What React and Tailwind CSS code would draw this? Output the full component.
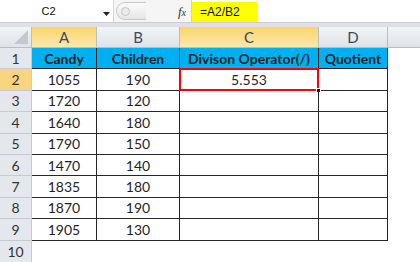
import React from "react";

const rows = [
  ["1055", "190", "5.553"],
  ["1720", "120", ""],
  ["1640", "180", ""],
  ["1790", "150", ""],
  ["1470", "140", ""],
  ["1835", "180", ""],
  ["1870", "190", ""],
  ["1905", "130", ""],
];

const RowHead = ({ n, selected }) => (
  <div
    className={
      "w-[32px] shrink-0 flex items-center justify-center border-r border-b border-[#c6cbd1] text-[14px] text-[#333] " +
      (selected ? "bg-[#f8d57e]" : "bg-[#e4e8ed]")
    }
  >
    {n}
  </div>
);

const Cell = ({ w, children, className = "" }) => (
  <div
    className={
      "shrink-0 flex items-center justify-center border-r border-b border-[#262626] text-[14px] text-[#1f1f1f] " +
      className
    }
    style={{ width: w }}
  >
    {children}
  </div>
);

const ColHead = ({ w, label, selected }) => (
  <div
    className={
      "shrink-0 flex items-center justify-center border-r border-b border-[#b9bec5] text-[15px] text-[#3b4a5e] " +
      (selected
        ? "bg-gradient-to-b from-[#fbd46a] to-[#fde9aa]"
        : "bg-gradient-to-b from-[#f2f4f6] to-[#dfe3e8]")
    }
    style={{ width: w }}
  >
    {label}
  </div>
);

export default function App() {
  return (
    <div className="w-[420px] h-[262px] overflow-hidden bg-white font-['Lato',sans-serif]">
      {/* formula bar */}
      <div className="h-[22px] flex items-stretch bg-white font-['Liberation_Sans',sans-serif]">
        <div className="w-[114px] shrink-0 relative flex items-center border-r border-[#d5d5d5]">
          <span className="w-full text-center pr-[16px] text-[11px] text-[#111]">C2</span>
          <svg className="absolute left-[103px] top-[12px]" width="7" height="4" viewBox="0 0 7 4">
            <path d="M0 0 L7 0 L3.5 4 Z" fill="#222" />
          </svg>
        </div>
        <div className="w-[78px] shrink-0 flex items-center bg-[#f5f5f5] border-r border-[#cfcfcf]">
          <div className="ml-[2px] h-[18px] w-[30px] rounded-l-full border-l border-y border-[#c9c9c9] bg-gradient-to-b from-[#fbfbfb] to-[#e6e6e6] flex items-center pl-[4px]">
            <div className="w-[9px] h-[9px] rounded-full border border-[#c4c4c4] bg-[#ececec]" />
          </div>
          <span className="ml-auto mr-[5px] font-['Liberation_Serif',serif] italic text-[13px] text-[#333] leading-none">
            f<span className="text-[10px]">x</span>
          </span>
        </div>
        <div className="flex-1 flex items-center">
          <div className="h-[20px] mt-[1px] w-[66px] bg-[#ffff00] flex items-center pl-[8px] text-[12px] text-[#111]">
            =A2/B2
          </div>
        </div>
      </div>
      <div className="h-[5px] bg-[#dde1e6] border-t border-[#c9ced4]" />

      {/* column headers */}
      <div className="h-[21px] flex">
        <div className="w-[32px] shrink-0 relative bg-gradient-to-b from-[#f2f4f6] to-[#dfe3e8] border-r border-b border-[#b9bec5]">
          <svg className="absolute right-[3px] bottom-[3px]" width="14" height="14" viewBox="0 0 14 14">
            <path d="M14 0 L14 14 L0 14 Z" fill="#c3c8ce" />
          </svg>
        </div>
        <ColHead w={65} label="A" selected />
        <ColHead w={83} label="B" />
        <ColHead w={139} label="C" selected />
        <ColHead w={69} label="D" />
        <div className="flex-1 bg-gradient-to-b from-[#f2f4f6] to-[#dfe3e8] border-b border-[#b9bec5]" />
      </div>

      {/* row 1 */}
      <div className="h-[21.4px] flex">
        <RowHead n={1} />
        <Cell w={65} className="bg-[#00b0f0] font-bold">Candy</Cell>
        <Cell w={83} className="bg-[#00b0f0] font-bold">Children</Cell>
        <Cell w={139} className="bg-[#00b0f0] font-bold whitespace-nowrap">Divison Operator(/)</Cell>
        <Cell w={69} className="bg-[#00b0f0] font-bold">Quotient</Cell>
      </div>

      {rows.map((r, i) => (
        <div key={i} className="h-[21.4px] flex">
          <RowHead n={i + 2} selected={i === 0} />
          <Cell w={65}>{r[0]}</Cell>
          <Cell w={83}>{r[1]}</Cell>
          <Cell w={139} className="relative">
            {r[2]}
            {i === 0 && (
              <>
                <div className="absolute -left-[1px] -top-[1px] -right-[1px] -bottom-[1px] border-2 border-[#ff0000]" />
                <div className="absolute -right-[3px] -bottom-[3px] w-[5px] h-[5px] bg-[#111] border border-white" />
              </>
            )}
          </Cell>
          <Cell w={69} />
        </div>
      ))}

      {/* row 10 */}
      <div className="h-[22px] flex">
        <RowHead n={10} />
      </div>
    </div>
  );
}
